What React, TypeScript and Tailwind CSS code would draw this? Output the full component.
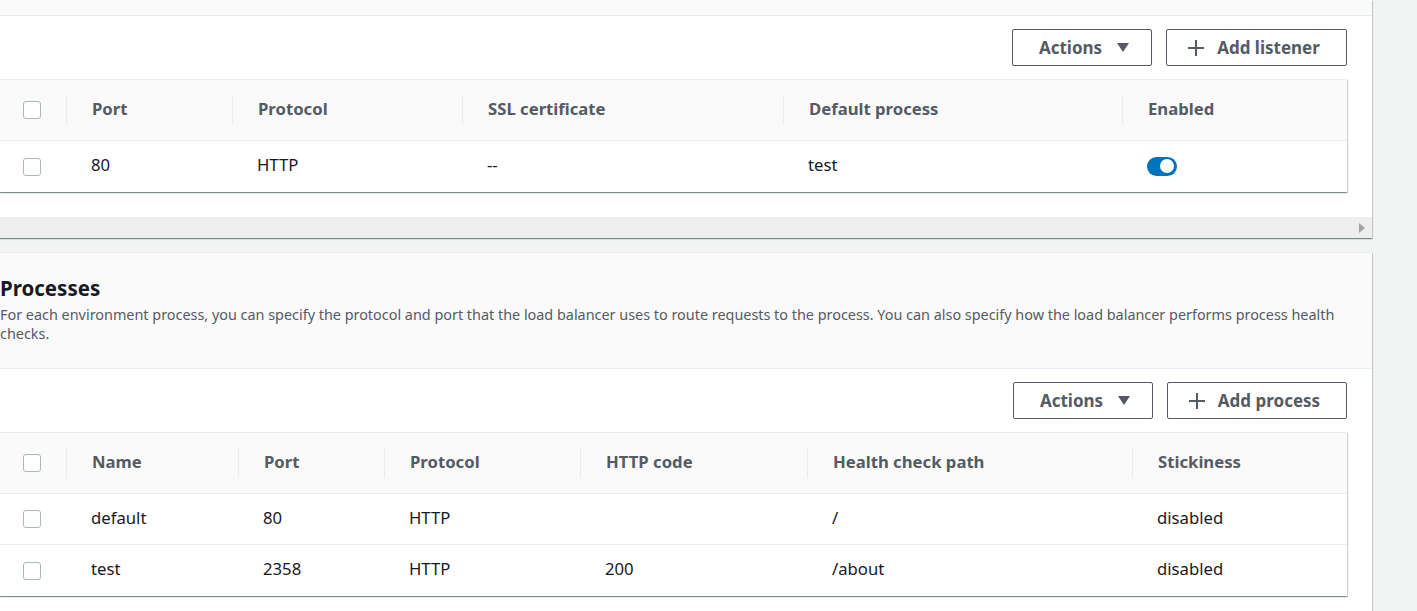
import React from 'react';

const CARD_SHADOW =
  'shadow-[0_1px_1px_0_rgba(0,28,36,0.3),1px_1px_1px_0_rgba(0,28,36,0.15),-1px_1px_1px_0_rgba(0,28,36,0.15)]';

function Checkbox() {
  return <div className="h-[18px] w-[18px] rounded-[3px] border border-[#aab7b8] bg-white" />;
}

function Caret() {
  return (
    <svg width="12" height="9" viewBox="0 0 12 9">
      <polygon points="0,0 12,0 6,9" fill="#545b64" />
    </svg>
  );
}

function Plus() {
  return (
    <svg width="18" height="18" viewBox="0 0 18 18">
      <path d="M9 1v16M1 9h16" stroke="#545b64" strokeWidth="2" fill="none" />
    </svg>
  );
}

function Toggle() {
  return (
    <div className="mt-[2px] flex h-[19px] w-[30px] items-center justify-end rounded-full bg-[#0073bb] pr-[3px]">
      <div className="h-[14px] w-[14px] rounded-full bg-white" />
    </div>
  );
}

function Toolbar({ addLabel, addWidth }: { addLabel: string; addWidth: string }) {
  return (
    <div className="flex justify-end gap-[14px] py-[13px] pr-[25px]">
      <button className="flex h-[37px] w-[140px] items-center justify-center gap-[15px] rounded-[2px] border border-[#545b64] bg-white pl-[4px] text-[17px] font-bold text-[#545b64]">
        Actions
        <Caret />
      </button>
      <button
        className={`flex h-[37px] ${addWidth} items-center justify-center gap-[12px] rounded-[2px] border border-[#545b64] bg-white pr-[6px] text-[17px] font-bold text-[#545b64]`}
      >
        <Plus />
        {addLabel}
      </button>
    </div>
  );
}

type Cell = string | React.ReactNode;

function DataTable({ cols, headers, rows }: { cols: string; headers: string[]; rows: Cell[][] }) {
  return (
    <div className={`w-[1347px] border-t border-[#eaeded] bg-white ${CARD_SHADOW}`}>
      <div className={`grid ${cols} h-[61px] border-b border-[#eaeded] bg-[#fafafa]`}>
        <div className="flex items-center pl-[23px]">
          <Checkbox />
        </div>
        {headers.map((h) => (
          <div key={h} className="flex items-center">
            <div className="flex h-[30px] w-full items-center border-l border-[#eaeded] pl-[25px] pb-[2px] text-[16.7px] font-bold text-[#545b64]">
              {h}
            </div>
          </div>
        ))}
      </div>
      {rows.map((row, i) => (
        <div
          key={i}
          className={`grid ${cols} h-[51px] ${i < rows.length - 1 ? 'border-b border-[#eaeded]' : ''}`}
        >
          <div className="flex items-center pl-[23px]">
            <Checkbox />
          </div>
          {row.map((c, j) => (
            <div key={j} className="flex items-center pl-[25px] pb-[3px] text-[16.7px] text-[#16191f]">
              {c}
            </div>
          ))}
        </div>
      ))}
    </div>
  );
}

export default function App() {
  return (
    <div className="h-[611px] w-[1417px] overflow-hidden bg-[#f2f3f3] font-['Noto_Sans',sans-serif]">
      {/* Listeners card (scrolled, header mostly above viewport) */}
      <div className={`w-[1372px] bg-white ${CARD_SHADOW}`}>
        <div className="h-[16px] border-b border-[#eaeded] bg-[#fafafa]" />
        <Toolbar addLabel="Add listener" addWidth="w-[181px]" />
        <DataTable
          cols="grid-cols-[66px_166px_230px_321px_339px_225px]"
          headers={['Port', 'Protocol', 'SSL certificate', 'Default process', 'Enabled']}
          rows={[['80', 'HTTP', '--', 'test', <Toggle key="t" />]]}
        />
        <div className="h-[25px]" />
        <div className="flex h-[21px] items-center justify-end bg-[#eeeeee] pr-[7px]">
          <svg width="6" height="10" viewBox="0 0 6 10">
            <polygon points="0,0 6,5 0,10" fill="#a3a3a3" />
          </svg>
        </div>
      </div>

      {/* Processes card */}
      <div className={`mt-[14px] w-[1372px] border-t border-[#eaeded] bg-white pb-[40px] ${CARD_SHADOW}`}>
        <div className="border-b border-[#eaeded] bg-[#fafafa] pt-[22px] pr-[20px] pb-[25px]">
          <h2 className="text-[20.5px] leading-[26px] font-bold text-[#16191f]">Processes</h2>
          <p className="mt-[4px] text-[14.4px] leading-[19px] text-[#545b64]">
            For each environment process, you can specify the protocol and port that the load balancer uses to route
            requests to the process. You can also specify how the load balancer performs process health checks.
          </p>
        </div>
        <Toolbar addLabel="Add process" addWidth="w-[180px]" />
        <DataTable
          cols="grid-cols-[66px_172px_146px_196px_227px_325px_215px]"
          headers={['Name', 'Port', 'Protocol', 'HTTP code', 'Health check path', 'Stickiness']}
          rows={[
            ['default', '80', 'HTTP', '', '/', 'disabled'],
            ['test', '2358', 'HTTP', '200', '/about', 'disabled'],
          ]}
        />
      </div>
    </div>
  );
}
